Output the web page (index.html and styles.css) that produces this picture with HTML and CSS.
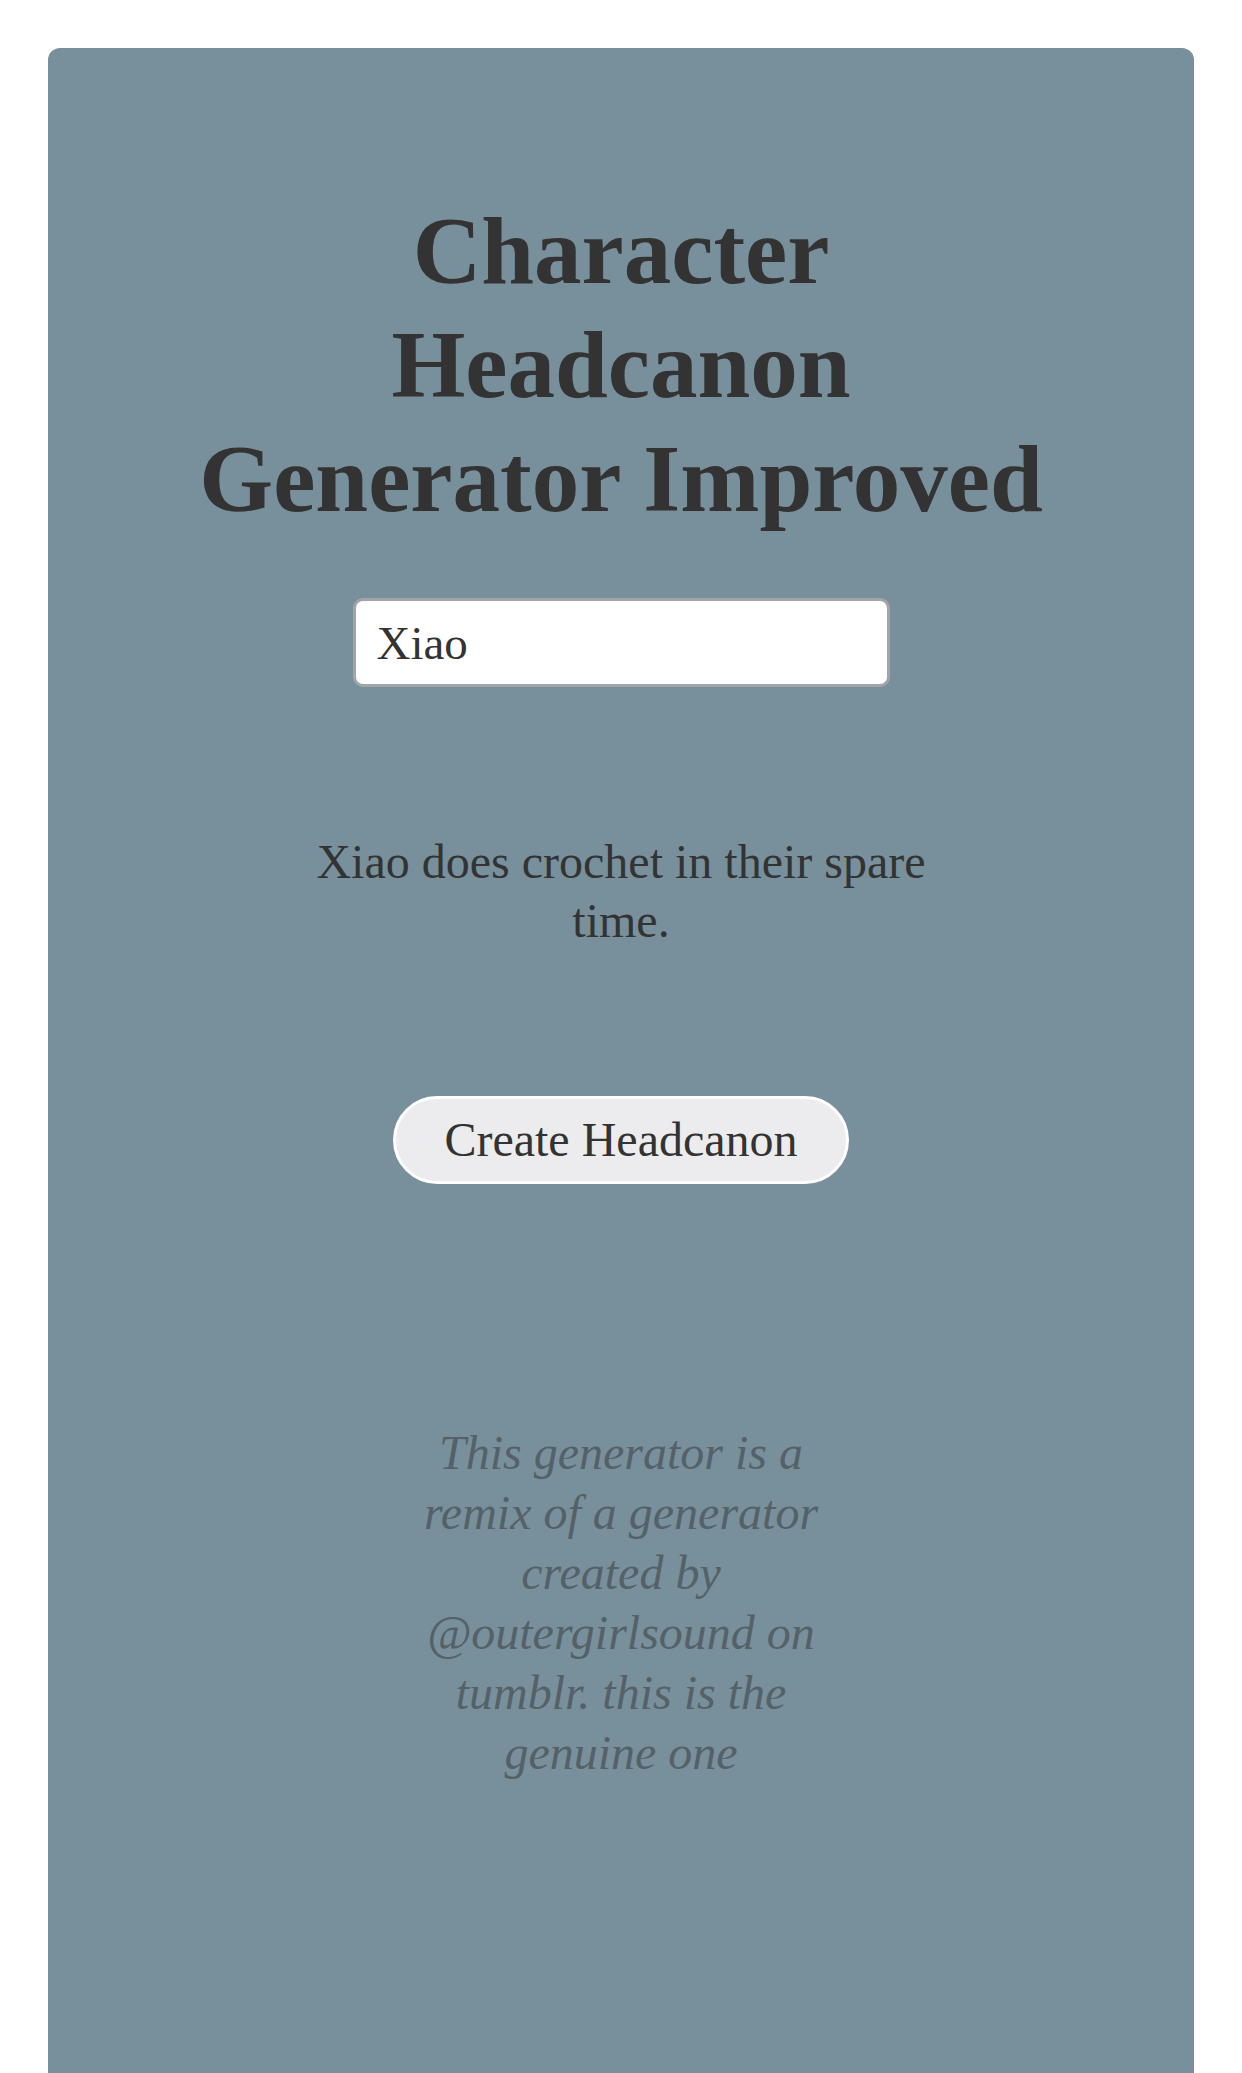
FILE: index.html
```html
<!DOCTYPE html>
<html lang="en">
<head>
<meta charset="utf-8">
<title>Character Headcanon Generator Improved</title>
<link rel="stylesheet" href="styles.css">
</head>
<body>
<main class="card">
  <h1 class="title">Character Headcanon Generator Improved</h1>
  <input class="name-input" type="text" value="Xiao">
  <p class="result">Xiao does crochet in their spare time.</p>
  <button class="create-btn" type="button">Create Headcanon</button>
  <p class="credit">This generator is a remix of a generator created by @outergirlsound on tumblr. this is the genuine one</p>
</main>
</body>
</html>
```

FILE: styles.css
```css
html, body {
  margin: 0;
  padding: 0;
  background: #ffffff;
}

body {
  padding: 48px 48px 0 48px;
  font-family: "Liberation Serif", "Times New Roman", serif;
  color: #333333;
}

.card {
  background: #78909c;
  border-radius: 12px 12px 0 0;
  min-height: 2100px;
  display: flex;
  flex-direction: column;
  align-items: center;
  padding-top: 146px;
  box-sizing: border-box;
}

.title {
  margin: 0;
  width: 870px;
  text-align: center;
  font-size: 95px;
  line-height: 114px;
  font-weight: bold;
  color: #333333;
}

.name-input {
  margin-top: 62px;
  width: 537px;
  height: 89px;
  box-sizing: border-box;
  border: 3px solid #a2a4a8;
  border-radius: 10px;
  background: #ffffff;
  padding: 0 21px;
  font-family: "Liberation Serif", "Times New Roman", serif;
  font-size: 47px;
  color: #333333;
  outline: none;
}

.result {
  margin: 145px 0 0 0;
  width: 660px;
  text-align: center;
  font-size: 48px;
  line-height: 59px;
  color: #333333;
}

.create-btn {
  margin-top: 146px;
  height: 88px;
  box-sizing: border-box;
  padding: 0 48px;
  border: 3px solid #ffffff;
  border-radius: 44px;
  background: #ececee;
  font-family: "Liberation Serif", "Times New Roman", serif;
  font-size: 48px;
  color: #333333;
  line-height: 1;
}

.credit {
  margin: 239px 0 0 0;
  width: 430px;
  text-align: center;
  font-size: 48px;
  line-height: 60px;
  font-style: italic;
  color: #333333;
  opacity: 0.5;
}
```
